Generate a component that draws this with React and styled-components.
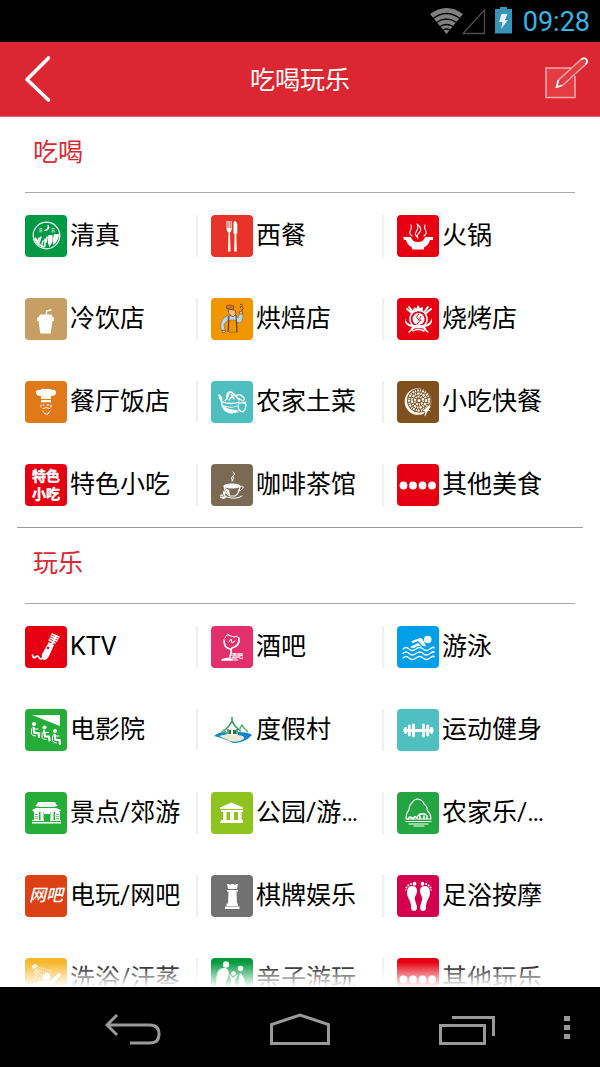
import React from "react"
import styled, { createGlobalStyle } from "styled-components"

const GlobalStyle = createGlobalStyle`
  * {
    box-sizing: border-box;
  }
  body {
    margin: 0;
    background: #fff;
    font-family: Roboto, "Noto Sans CJK SC", sans-serif;
  }
`

const Screen = styled.div`
  display: flex;
  flex-direction: column;
  height: 100vh;
  overflow: hidden;
`

const StatusBar = styled.div`
  display: flex;
  flex: none;
  align-items: center;
  justify-content: flex-end;
  height: 42px;
  padding-right: 10px;
  background: #000;
`

const Clock = styled.time`
  margin-left: 11px;
  padding-top: 2px;
  color: #33b5e5;
  font-size: 27px;
  line-height: 42px;
`

const Header = styled.header`
  display: grid;
  flex: none;
  grid-template-columns: 80px 1fr 80px;
  align-items: center;
  height: 75px;
  border-bottom: 1px solid #e8686f;
  background: #dc2732;
`

const HeaderTitle = styled.h1`
  margin: 0;
  padding-top: 4px;
  color: #fff;
  font-size: 25px;
  font-weight: 400;
  line-height: 36px;
  text-align: center;
`

const IconButton = styled.button`
  display: flex;
  align-items: center;
  justify-content: ${props => props.$align || "center"};
  height: 100%;
  padding: 0 12px 0 24px;
  border: none;
  background: transparent;
  cursor: pointer;
`

const ListFrame = styled.main`
  position: relative;
  flex: 1;
  min-height: 0;
`

const List = styled.div`
  height: 100%;
  padding: 0 17px;
  overflow-y: auto;
  scrollbar-width: none;
`

const BottomFade = styled.div`
  position: absolute;
  right: 0;
  bottom: 0;
  left: 0;
  height: 25px;
  background: linear-gradient(rgba(255, 255, 255, 0), #fff);
  pointer-events: none;
`

const Section = styled.section`
  padding-bottom: 21px;
  border-bottom: 1px solid #999;
`

const SectionTitle = styled.h2`
  height: 76px;
  margin: 0 8px 22px;
  padding: 18px 8px 0;
  border-bottom: 1px solid #a9a9a9;
  color: #dc2732;
  font-size: 25px;
  font-weight: 400;
  line-height: 36px;
`

const CategoryGrid = styled.div`
  display: grid;
  grid-template-columns: repeat(3, 1fr);
  row-gap: 41px;
  padding-left: 8px;
`

const Category = styled.a`
  display: flex;
  gap: 3px;
  height: 42px;
  margin-right: 13px;
  border-right: 2px solid ${props => (props.$last ? "transparent" : "#efefef")};
  color: #000;
  text-decoration: none;
`

const Tile = styled.svg`
  flex: none;
  width: 42px;
  height: 42px;
  border-radius: 4px;
  background: ${props => props.$bg};
`

const Label = styled.span`
  overflow: hidden;
  font-size: 25px;
  line-height: 41px;
  white-space: nowrap;
`

const NavBar = styled.nav`
  display: grid;
  flex: none;
  grid-template-columns: 1fr 1fr 1fr 50px;
  height: 80px;
  padding-left: 50px;
  background: #000;
`

const NavButton = styled.button`
  display: flex;
  align-items: center;
  justify-content: center;
  padding: 5px 0 0;
  border: none;
  background: transparent;
  cursor: pointer;
`

const MenuButton = styled(NavButton)`
  justify-content: flex-start;
  padding: 2px 0 0 14px;
`

const line = (width = 1) => ({
  fill: "none",
  stroke: "#fff",
  strokeWidth: width,
  strokeLinecap: "round",
  strokeLinejoin: "round",
})

const Dots = () => (
  <g fill="#fff">
    {[6.5, 16, 25.5, 35].map(x => (
      <circle key={x} cx={x} cy="21.5" r="3.9" />
    ))}
  </g>
)

const Halal = () => (
  <g>
    <circle cx="21.5" cy="20.5" r="13.3" {...line(1.2)} />
    <path d="M23 10q3 5-3.500 5.500Q24 14 23 10z" fill="#fff" stroke="#fff" />
    <text x="13.500" y="16.500" fontSize="4" fill="#fff">清</text>
    <text x="26" y="16.500" fontSize="4" fill="#fff">真</text>
    <path d="M10.500 23l2 4 1.500-4M14 28l2-6M17 29l1-3M20 31v-7M22 22l-1 5M10 24l3 5 6 3" {...line(1.5)} />
    <path d="M23.500 20q-2 6 1 12 4-5 3-12zM29 19q-2 6-1 11 6-4 6-11z" fill="#fff" />
  </g>
)

const ColdDrink = () => (
  <g>
    <path d="M21.500 18v-5l5-1.200" {...line(1.4)} strokeLinecap="butt" />
    <path d="M15 16.500h11.500l1.500 3h1v3.500H12v-3.500h1.500zM13.500 23h14l-1.800 12.500H15.300z" fill="#fff" />
  </g>
)

const Cutlery = () => (
  <g fill="#fff">
    <path d="M15.500 6h1v7h1V6h1.200v7h1V6h1v8q0 2.500-1.700 3.500l.5 19h-2.500l.5-19q-2-1-2-3.500z" />
    <path d="M23.500 6q3 .5 2.800 5v7.500h-1l.5 18h-2.600l.3-18h-1V10q0-4 1-4z" />
  </g>
)

const Baker = () => (
  <g>
    <path d="M17 17l-5 4q-4 6-1 12l3-1-1-6 4-4z" fill="#b9d5f0" stroke="#665" strokeWidth=".5" />
    <path d="M17 18l7-1 3 3 2-5 3 1q0 7-3 9l-3-1v10h-8z" fill="#b9d5f0" stroke="#665" strokeWidth=".5" />
    <path d="M18 22h7l1 12h-8z" fill="#ee9800" stroke="#a35a12" strokeWidth=".5" />
    <path d="M18 18l-1 16M25 17l1 17" fill="none" stroke="#6b3615" />
    <path d="M17 11l7 1 1 4-3 3-3-2q-2-2-2-6z" fill="#f7bd86" stroke="#6b3615" strokeWidth=".7" />
    <path d="M15 10q0-3 3-3l5 1-1 4z" fill="#d47b11" stroke="#6b3615" strokeWidth=".7" />
    <path d="M29 16l-1-2 3-1 1 3zM11 34l1-2 3 1-2 2z" fill="#f7bd86" stroke="#6b3615" strokeWidth=".6" />
    <path d="M31 13v-2M29 7q3-2 2 1c-1 3-3 1-1 0m1 1q3 1 0 3" fill="none" stroke="#8b4d10" />
  </g>
)

const HotPot = () => (
  <g>
    <path d="M6 22h8q1 5 7 5t7-5h8v3h-3q-1 5-6 7.500v2H15v-2Q10 30 9 25H7z" fill="#fff" />
    <path d="M15 21c-6-5 2-6-1-11M21 23c-7-6 3-7-1-14 4 3 5 6 2 9q-3 3-1 5M27 21c6-5-2-6 1-11" {...line(1.1)} />
  </g>
)

const Barbecue = () => (
  <g>
    <circle cx="21.500" cy="21" r="8.500" {...line(1.6)} strokeDasharray="2 .8" />
    <circle cx="21.500" cy="21" r="6" fill="#fff" />
    <path d="M22 16q-4 3-1 5t-1 5M24 18q-3 3 0 5" fill="none" stroke="#e60012" strokeWidth="1" />
    <path d="M16 13q0-3 2-4l1 2 2-4 2 3 3-1v4q-5-2-10 0z" fill="#fff" />
    <path d="M10 11l5 4M12 9l4 5M34 11l-5 4M31 9l-3 4" {...line(2)} />
    <path d="M8 20q-1 8 7 9l-2 3q9-4 17 0l-2-3q8-1 7-9-2 7-9 7h-9q-8 0-9-7z" fill="#fff" />
    <path d="M12 34l4-3M31 34l-4-3M16 33q5-3 11 0" {...line(1.4)} />
  </g>
)

const Chef = () => (
  <g>
    <path d="M16 18v-3q-5 0-5-3.500T15.500 9q1-2 5.500-1 5-1 6 1 4-1 4 2.500T26 15v3zM16 19h10v3H16z" fill="#fff" />
    <path d="M16 21.500h10" stroke="#e07a18" strokeWidth=".7" />
    <path d="M16 24v2M26 24v2M18 24h1M22 24h2M18 27.500q3-2 7 0M18 30q1 4 5 3l2-3" {...line(1)} />
  </g>
)

const Vegetables = () => (
  <g>
    <path d="M7 13q6 2 4 9 3 7 15 7l2 2q-11 4-16-3-2-3-2-7-2-3-3-8z" fill="#fff" />
    <path d="M11 21q10 3 17 0M13 25q7 2 13 0M14 20l3-5M16 18q-1-7 3-7t3 4M18 19l5-6 5 6M20 13l3 5M18 12l-2 6M25 15q4-3 7 1M27 17l5 3M29 14q7 3 3 6" {...line(1.3)} />
    <path d="M27 25q0-4 4-3 4-1 4 3 0 3-3 6-5-1-5-6zM31 22l4-1" {...line(1.2)} />
    <path d="M12 23q9 5 17 0" fill="none" stroke="#4ebfbe" strokeWidth=".7" />
  </g>
)

const Pizza = () => (
  <g>
    <circle cx="21" cy="20.500" r="13.300" fill="#fff" />
    <circle cx="22" cy="19.500" r="12" fill="#80501f" />
    <circle cx="22" cy="19.500" r="10" {...line(2.2)} strokeLinecap="butt" strokeDasharray="2 .8 1 1.200" />
    <circle cx="22" cy="19.500" r="7" {...line(2.2)} strokeLinecap="butt" strokeDasharray="1.500 .9 2.500 .8" />
    <circle cx="22" cy="19.500" r="4" {...line(2.2)} strokeLinecap="butt" strokeDasharray="1.200 .8 2 1" />
    <circle cx="22" cy="19.500" r="1.500" fill="#fff" />
    <path d="M25 30l8-7 1 3-2 2 3 3-4-1-2 5q-2 1-2-1l1-3z" fill="#fff" stroke="#80501f" strokeWidth=".8" />
  </g>
)

const LocalSnacks = () => (
  <g fill="#fff" stroke="#fff" strokeWidth=".5" strokeLinejoin="round" fontSize="14" fontWeight="700">
    <text x="7" y="17">特色</text>
    <text x="7" y="34.500">小吃</text>
  </g>
)

const Coffee = () => (
  <g>
    <path d="M13 22q1 8 6 10h5q4-2 5-10" {...line(1.2)} />
    <ellipse cx="21" cy="22" rx="8" ry="2" fill="#fff" stroke="#fff" />
    <path d="M29 23q4-2 3 1t-5 3M16 33q9 3 15-1M22 17q-3-3 0-5t0-4M21 17q3-3 1-5" {...line(1)} />
    <path d="M14 24q2 6 5 7l-1-5z" fill="#fff" />
    <path d="M12 27l3 1-1 3 2 2-3 2-4-1v-3l3-1z" fill="#fff" />
    <path d="M12 30l1 3M9 32l3 1" stroke="#7a6a54" strokeWidth=".7" />
  </g>
)

const Microphone = () => (
  <g>
    <path d="M17 28l7-12 5 3-5 11q-2 4-5 4-3-1-2-6z" fill="#fff" />
    <path d="M27 8l7 3M26 10l7 3M25 12l7 3M24 14l6 3" {...line(1.4)} />
    <path d="M31 10l-4 8" {...line(1.8)} />
    <circle cx="23" cy="22" r="1.200" fill="#e60012" />
    <path d="M18 32q-3 2-4-.5T10.500 31 7.500 29" {...line(1.7)} />
  </g>
)

const WineGlass = () => (
  <g>
    <path d="M13 14q0 8 6 9 2 1 1 4l-2 7M28 12q1 8-7 10-1 1-1 4M11 34q6-3 10 0z" {...line(1.6)} />
    <path d="M14 12q1-5 6-2l3 1q3-2 5 1M18 16l2-3 1 4 3-2M17 8l1 1" {...line(1)} />
    <text x="20" y="32" fontSize="6" fontWeight="700" fill="#fff">酒吧</text>
    <path d="M22 34h5" {...line(1)} />
  </g>
)

const Swimmer = () => (
  <g>
    <circle cx="30.700" cy="13.500" r="3.800" fill="#fff" />
    <path d="M15 15l8-3q2 0 3 2l3 6q-4 1-5-2l-3-3-5 2q-2 0-1-2zM13 21l8-4 4 4q-4-2-6 0-3 2-6 0z" fill="#fff" />
    {[23, 27.5, 32].map(y => (
      <path key={y} d={`M6 ${y}q3-3 6 0t7 0 7 0 7 0 4-1`} {...line(1.3)} />
    ))}
  </g>
)

const Cinema = () => (
  <g>
    <path d="M7 6h28v11z" fill="#fff" />
    {[[0, 0], [10.5, 3.5], [21, 7]].map(([x, y]) => (
      <g key={x} transform={`translate(${x} ${y})`}>
        <circle cx="9" cy="15" r="2" fill="#fff" />
        <path d="M8.500 18.500l1 5.500h4l.5 4" {...line(2.2)} />
        <path d="M10 20h3M6.500 20v5q1 2 4 2" {...line(1)} />
      </g>
    ))}
  </g>
)

const Resort = () => (
  <g>
    <path d="M3 27q5-4 11-4h12q12 0 15 3-7 8-19 8-7-4-19-7z" fill="#1683c9" />
    <path d="M8 27q8-3 17-1 9 0 8 4-6 4-14 2z" fill="#eee9d5" />
    <path d="M15 20l6-7 6 7v6H16z" fill="#fff" />
    <path d="M21 8v4q-2 5-7 9M21 12q2 5 7 9M17 25v-5M26 25v-5" fill="none" stroke="#279653" strokeWidth="1.500" />
    <path d="M18 21h2v4h-2zM22 21h3v4h-3z" fill="#247448" />
    <path d="M29 23v-4l2-3 2 3 4 4M10 24l3-3 2 3" fill="none" stroke="#55b579" strokeWidth="1.500" />
  </g>
)

const Dumbbell = () => (
  <g>
    <path d="M6.500 20h30v3h-30z" fill="#fff" />
    <path d="M8.500 19.500v4M12.300 17v9M16.500 16v11M26.500 16v11M30.700 17v9M34.500 19.500v4" {...line(2.9)} />
    <path d="M18 21.500h7" {...line(3)} />
  </g>
)

const Pavilion = () => (
  <g fill="#fff">
    <path d="M13 10h17l1 2 2 2-5 1H15l-5-1 2-2zM7 18l4-2h20l5 2-2 2H9zM7 30h29v1.500H7z" />
    <path d="M9 20h5v9H9zM15.500 20h3v9h-3zM25.500 20h3v9h-3zM30 20h5v9h-5zM19 20h6v2h-6z" />
    <path d="M10 22.500h3m-3 2h3m-3 2h3m18-4h3m-3 2h3m-3 2h3" stroke="#24ad38" strokeWidth=".7" />
    <path d="M7 28.500h12M25 28.500h11" stroke="#fff" />
  </g>
)

const Bank = () => (
  <g fill="#fff">
    <path d="M20.500 10.500L32 15.500v1.500H9v-1.500zM10 18h22v2H10zM12 20h3.500v8H12zM19 20h4v8h-4zM27 20h3.500v8H27zM10 28h22v1.500H10zM9 29.500h23V31H9z" />
  </g>
)

const FarmHouse = () => (
  <g>
    <path d="M9 27q0-6 3-9 0-5 3-7 2-4 6-4 5 1 6 5 4 3 3 6 4 4 4 9z" {...line(1.1)} />
    <path d="M11 27q2-4 5 0 2-4 4-1M20 25l3-3h5l2 2v3M23 24v3M27 24v3" {...line(1.5)} />
    <path d="M9 29.500h25M12 32h19M17 34h10" {...line(1.2)} />
  </g>
)

const NetCafe = () => (
  <text x="4" y="26" fontSize="17" fontStyle="italic" fontWeight="500" fill="#fff">网吧</text>
)

const ChessRook = () => (
  <g fill="#fff">
    <path d="M16 9h2l1 1 1-1h3l1 1 1-1h2l-1 5h-9zM16 15h11v1.500H16zM17.500 16.500h8L26 29h-9zM15.500 28.500h11.500V31H15.500zM14 31.500h14.500V34H14z" />
  </g>
)

const Feet = () => (
  <g fill="#fff">
    {[1, -1].map(side => (
      <g key={side} transform={side === 1 ? undefined : "translate(43 0) scale(-1 1)"}>
        <path d="M15 11q5 0 5 5c0 4-3 5-2 9l2 7q0 4-3 4t-3-4c0-7-4-9-4-14q0-7 5-7z" />
        <ellipse cx="17.500" cy="8.700" rx="1.800" ry="2" />
        <circle cx="13.800" cy="9" r="1.100" />
        <circle cx="11.300" cy="10.500" r="1" />
        <circle cx="9.500" cy="12.500" r=".9" />
        <circle cx="8.700" cy="15" r=".8" />
      </g>
    ))}
  </g>
)

const Shower = () => (
  <g>
    <path d="M7 8l3-2 3 2-5 4z" fill="#fff" />
    <path d="M12 11l14 5M11 12l10 7M10 13l5 9M10 14l1 7" {...line(1.3)} strokeDasharray=".1 2.200" />
    <path d="M14 9.500l12 3M11 12.500l7 8" {...line(1.1)} strokeDasharray=".1 2.200" />
    <circle cx="21.500" cy="19" r="3.800" fill="#fff" />
    <path d="M34 17l-8 8H14l-3 6" {...line(3.5)} />
  </g>
)

const Family = () => (
  <g fill="#fff">
    <circle cx="15" cy="6.500" r="3.200" />
    <circle cx="29.500" cy="10.500" r="2.700" />
    <circle cx="22.500" cy="15.500" r="2.300" />
    <path d="M13 10c7 0 5 9 2 13l-1 8H6q-3-21 7-21zM29 15q5 3 6 16H27q1-8 1-11zM18 16l4 4 5-4-3 6v9h-4v-9z" />
  </g>
)

const eating = [
  { name: "清真", bg: "#009944", icon: Halal },
  { name: "西餐", bg: "#e83428", icon: Cutlery },
  { name: "火锅", bg: "#e60012", icon: HotPot },
  { name: "冷饮店", bg: "#c79f62", icon: ColdDrink },
  { name: "烘焙店", bg: "#f29600", icon: Baker },
  { name: "烧烤店", bg: "#e60012", icon: Barbecue },
  { name: "餐厅饭店", bg: "#e07a18", icon: Chef },
  { name: "农家土菜", bg: "#4ebfbe", icon: Vegetables },
  { name: "小吃快餐", bg: "#80501f", icon: Pizza },
  { name: "特色小吃", bg: "#e60012", icon: LocalSnacks },
  { name: "咖啡茶馆", bg: "#7a6a54", icon: Coffee },
  { name: "其他美食", bg: "#e60012", icon: Dots },
]

const playing = [
  { name: "KTV", bg: "#e60012", icon: Microphone },
  { name: "酒吧", bg: "#e2306c", icon: WineGlass },
  { name: "游泳", bg: "#00a0e9", icon: Swimmer },
  { name: "电影院", bg: "#24ad38", icon: Cinema },
  { name: "度假村", bg: "transparent", icon: Resort },
  { name: "运动健身", bg: "#50bfbf", icon: Dumbbell },
  { name: "景点/郊游", bg: "#24ad38", icon: Pavilion },
  { name: "公园/游…", bg: "#8fc31f", icon: Bank },
  { name: "农家乐/…", bg: "#24a544", icon: FarmHouse },
  { name: "电玩/网吧", bg: "#dd4014", icon: NetCafe },
  { name: "棋牌娱乐", bg: "#727171", icon: ChessRook },
  { name: "足浴按摩", bg: "#d7004f", icon: Feet },
  { name: "洗浴/汗蒸", bg: "#f8b62d", icon: Shower },
  { name: "亲子游玩", bg: "#009a3e", icon: Family },
  { name: "其他玩乐", bg: "#e60012", icon: Dots },
]

const CategorySection = ({ title, items }) => (
  <Section>
    <SectionTitle>{title}</SectionTitle>
    <CategoryGrid>
      {items.map(({ name, bg, icon: Icon }, index) => (
        <Category key={name} href="#" $last={index % 3 === 2}>
          <Tile viewBox="0 0 42 42" $bg={bg} aria-hidden="true">
            <Icon />
          </Tile>
          <Label>{name}</Label>
        </Category>
      ))}
    </CategoryGrid>
  </Section>
)

const StatusIcons = () => (
  <svg width="82" height="42" viewBox="0 0 82 42" aria-hidden="true">
    <path d="M0 14Q16.500 2 33 14L16.500 34z" fill="#808080" />
    <path d="M3 18.500q13.500-10 27 0M6.500 22.500q10-7 20 0M10 26.500q6.500-4 13 0M13 30q3.500-2 7 0" fill="none" stroke="#000" strokeWidth="1.300" />
    <path d="M33 33.500L54.500 10v23.500z" fill="none" stroke="#4c4c4c" strokeWidth="1.300" />
    <path d="M65 9h5V7h7v2h5v24.500H65z" fill="#3793b8" />
    <path d="M71.500 14h6l-2.500 6h3l-7 9 1.500-7h-3.500z" fill="#e4f1f6" />
  </svg>
)

const App = () => (
  <>
    <GlobalStyle />
    <Screen>
      <StatusBar>
        <StatusIcons />
        <Clock>09:28</Clock>
      </StatusBar>
      <Header>
        <IconButton aria-label="返回" $align="flex-start">
          <svg width="28" height="50" viewBox="0 0 28 50">
            <path d="M24.500 4L3 25.500 24.500 46" {...line(3.6)} />
          </svg>
        </IconButton>
        <HeaderTitle>吃喝玩乐</HeaderTitle>
        <IconButton aria-label="编辑" $align="flex-end">
          <svg width="44" height="44" viewBox="0 0 44 44">
            <g fill="#e53c43" stroke="#f5a9ac" strokeWidth="1.600">
              <path d="M27 11H2v29.500h29V19" />
              <path d="M12.500 30l2-7L37 2.500q4-2.500 5.500 0t-1 5L19 28z" strokeLinejoin="round" />
              <path d="M37 2.500q4-2.500 5.500 0t-1 5M14.500 23l-2 7 5-1" fill="none" stroke="#fff" />
            </g>
          </svg>
        </IconButton>
      </Header>
      <ListFrame>
        <List>
          <CategorySection title="吃喝" items={eating} />
          <CategorySection title="玩乐" items={playing} />
        </List>
        <BottomFade />
      </ListFrame>
      <NavBar>
        <NavButton aria-label="后退">
          <svg width="56" height="32" viewBox="0 0 56 32" fill="none" stroke="#999" strokeWidth="3">
            <path d="M12 1L2 11l10 10M2 11h43q9 0 9 9t-9 9H25" />
          </svg>
        </NavButton>
        <NavButton aria-label="主页">
          <svg width="60" height="34" viewBox="0 0 60 34" fill="none" stroke="#999" strokeWidth="3">
            <path d="M1.500 30.500v-19L30 2l28.500 9.500v19z" />
          </svg>
        </NavButton>
        <NavButton aria-label="最近任务">
          <svg width="57" height="32" viewBox="0 0 57 32" fill="none" stroke="#999" strokeWidth="3">
            <path d="M2.500 11.500h44v18h-44zM14 3.500h41.500V22" />
          </svg>
        </NavButton>
        <MenuButton aria-label="菜单">
          <svg width="6" height="26" viewBox="0 0 6 26" fill="#999">
            <path d="M0 1h6v5H0zM0 10h6v5H0zM0 19h6v5H0z" />
          </svg>
        </MenuButton>
      </NavBar>
    </Screen>
  </>
)

export default App
